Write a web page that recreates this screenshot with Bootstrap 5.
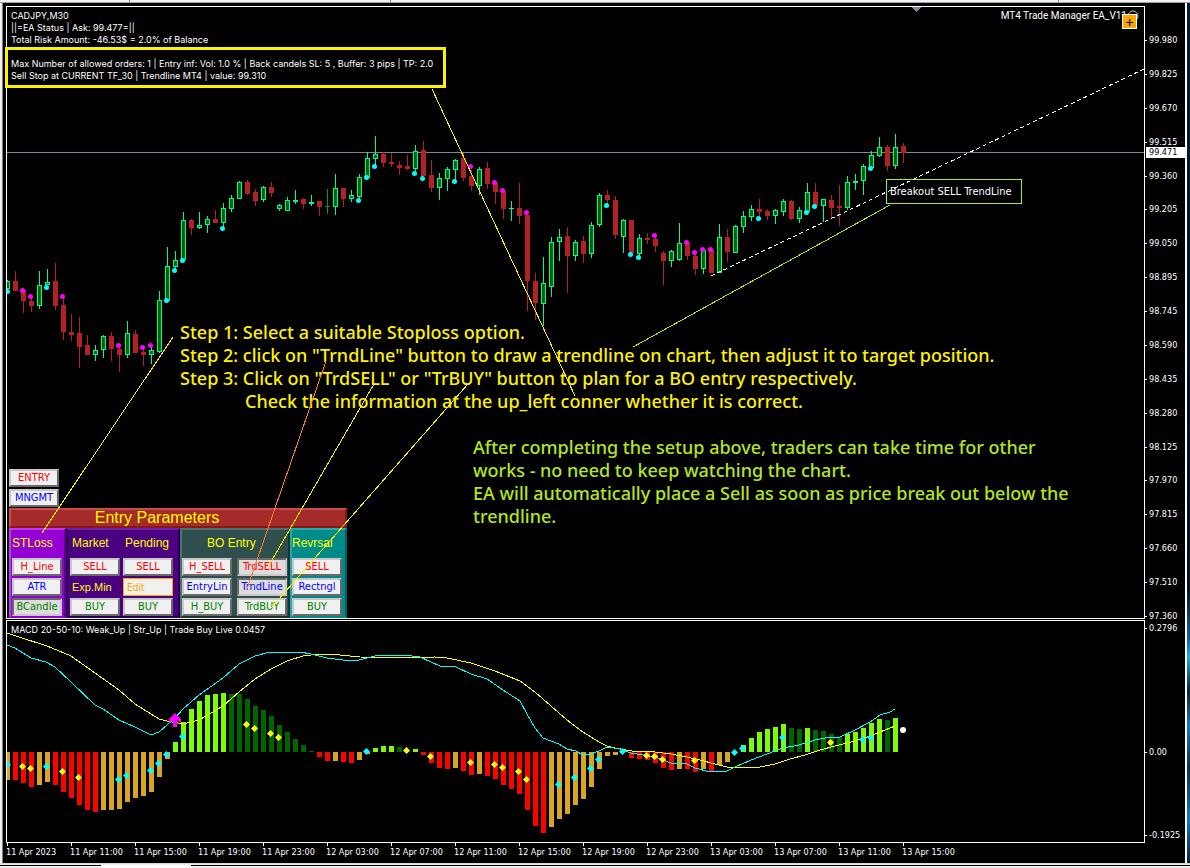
<!DOCTYPE html>
<html lang="en">
<head>
<meta charset="utf-8">
<meta name="viewport" content="width=device-width, initial-scale=1">
<title>CADJPY,M30</title>
<link rel="stylesheet" href="https://cdn.jsdelivr.net/npm/bootstrap@5.3.0/dist/css/bootstrap.min.css">
<style>
:root{--ink:#fff200;--lime:#b5e61d}
body{background:#f0f0f0;color:#fff;font:9px/12px Inter,sans-serif}
.top-strip{height:3px;border-bottom:1px solid #a0a0a0;padding:0 131px 0 129px}
.top-strip i{width:1px;background:#808080}
.top-strip i:nth-child(2){margin-left:260px;margin-right:auto}
.left-edge{width:3px;border-right:1px solid #808080}
.desk{width:3px;background:linear-gradient(#031a33,#02101f 68%,#1163a8 74%,#1aaad8 76%,#04203c 80%,#1478bd 84%,#053055 89%,#1478bd 95%,#04203c)}
.win{background:#000;padding:3px 0 0 3px;border-right:2px solid #fff}
.pane{border:1px solid #fff;min-width:0}
.pane svg{position:absolute;inset:0;width:100%;height:100%}
.ink-layer{z-index:3;pointer-events:none}
.price-row{min-height:0}
.macd-row{height:223px;margin-top:1px}
.scale{width:40px;font:9px/12px "DejaVu Sans Condensed",sans-serif}
.tick{padding-left:4px;position:relative}
.tick::before{content:"";position:absolute;left:0;top:6px;width:2px;height:1px;background:#fff}
.price-ticks{padding-top:28px;margin-bottom:-3px}
.macd-ticks{padding:2px 0}
.zero{margin-top:41px}
.price-now{left:1px;right:0;top:141px;background:#fff;color:#000;padding-left:3px;line-height:11px}
.times{height:20px;font:9px/12px "DejaVu Sans Condensed",sans-serif;overflow:hidden}
.times span{flex:0 0 64px;white-space:nowrap;padding-top:3px;position:relative}
.times span::before{content:"";position:absolute;left:1px;top:0;width:1px;height:3px;background:#fff}
.foot{height:5px;border-top:1px solid #d8d8d8}
.foot div{border-top:1px solid #000;margin-top:1px}
.foot .tab-on{border-color:#fff;background:#fff;width:90px}
.foot .tab-a{width:101px}
.info{left:4px;top:3px;z-index:2}
.info p{margin:0}
.setup{left:-2px;top:40px;width:441px;height:41px;border:3px solid var(--ink);padding:8px 0 0 3px;white-space:nowrap}
.brand{right:5px;top:3px;font-size:10px;font-family:Roboto,sans-serif}
.brand svg{width:12px;height:12px}
.plus{right:7px;top:7px;width:15px;height:15px;border:1px solid #fff;border-radius:0;background:#ffa500;color:#000;padding:0;font:14px/12px "Liberation Sans",sans-serif}
.steps,.after{font:500 18px/23px "Noto Sans",sans-serif;white-space:pre;z-index:2}
.steps{left:173px;top:314px;color:var(--ink)}
.after{left:466px;top:429px;color:var(--lime)}
.steps p,.after p{margin:0}
.steps .cont{padding-left:65px}
.callout{left:879px;top:172px;width:136px;height:25px;border:1px solid var(--lime);font:11px/23px "DejaVu Sans Condensed",sans-serif;padding-left:3px;z-index:2}
.panel{left:2px;bottom:0;width:338px;z-index:2}
.eb{display:block;width:50px;height:18px;padding:0;background:#f0f0f0;border:2px solid;border-color:#c8c8c8 #696969 #696969 #c8c8c8;font:11px/14px "DejaVu Sans Condensed",sans-serif;white-space:nowrap}
.eb.on{background:#dcdcdc;border-color:#696969 #c8c8c8 #c8c8c8 #696969}
.tabs{row-gap:2px;margin-bottom:1px}
.red{color:#f00}.blue{color:#00f}.green{color:green}
.head{height:20px;background:#a52a2a;border:2px solid;border-color:#c94b4b #8b1414 #8b1414 #c94b4b;color:#ff0;font:16px/16px "Liberation Sans",sans-serif;padding-right:42px;margin:0}
.group{height:90px;border:2px solid;display:grid;grid-template-rows:26px 18px 18px 18px;row-gap:2px;column-gap:3px;justify-content:start;justify-items:start}
.g2{grid-template-columns:50px 50px}
.ttl{color:#ff0;font:12px/26px "Liberation Sans",sans-serif;white-space:nowrap;margin:0}
.sl{width:57px;padding-left:1px;background:#9400d3;border-color:#b93cf0 #5c0089 #9400d3 #b93cf0}
.mk{width:114px;padding-left:2px;background:#4b0082;border-color:#6b22a4 #2c0050 #2c0050 #2c0050}
.mk .ttl,.exp{padding-left:2px}
.bo{width:110px;background:#2f4f4f;border-color:#4f7070 #1d3333 #1d3333 #4f7070;column-gap:5px}
.bo .ttl{grid-column:1/3;padding-left:25px}
.rv{width:57px;background:#008b8b;border-color:#20acac #005f5f #008b8b #20acac}
.exp{color:#ff0;font:11px/18px "Liberation Sans",sans-serif}
.edit{width:50px;height:18px;border:1px solid #ffa500;background:#f0f0f0;color:#ffa500;padding:0 3px;font:10px/14px "DejaVu Sans Condensed",sans-serif}
</style>
<script src="https://cdn.jsdelivr.net/npm/bootstrap@5.3.0/dist/js/bootstrap.bundle.min.js"></script>
</head>
<body>
<div class="d-flex flex-column vh-100">
  <div class="top-strip d-flex"><i></i><i></i><i></i></div>
  <div class="d-flex flex-fill" style="min-height:0">
    <div class="left-edge"></div>
    <main class="win flex-fill d-flex flex-column">
      <section class="price-row d-flex flex-fill">
        <div class="pane flex-fill position-relative">
          <svg id="price" viewBox="7 7 1137 611" preserveAspectRatio="none" shape-rendering="crispEdges"></svg>
          <div class="info position-absolute">
            <p>CADJPY,M30</p>
            <p>||=EA Status | Ask: 99.477=||</p>
            <p>Total Risk Amount: -46.53$ = 2.0% of Balance</p>
          </div>
          <div class="setup position-absolute">Max Number of allowed orders: 1 | Entry inf: Vol: 1.0 % | Back candels SL: 5 , Buffer: 3 pips | TP: 2.0<br>Sell Stop at CURRENT TF_30 | Trendline MT4 | value: 99.310</div>
          <div class="brand position-absolute d-flex align-items-center">MT4 Trade Manager EA_V11
            <svg class="position-static" viewBox="0 0 12 12" fill="none" stroke="#ccc"><circle cx="6" cy="6" r="5"/><path d="M3.5 7.5q2.500 2 5 0M4 4.500h1M7 4.500h1"/></svg></div>
          <button class="plus position-absolute" type="button" aria-label="Expand">+</button>
          <div class="callout position-absolute">Breakout SELL TrendLine</div>
          <div class="steps position-absolute"><p>Step 1: Select a suitable Stoploss option.</p><p>Step 2: click on "TrndLine" button to draw a trendline on chart, then adjust it to target position.</p><p>Step 3: Click on "TrdSELL" or "TrBUY" button to plan for a BO entry respectively.</p><p class="cont">Check the information at the up_left conner whether it is correct.</p></div>
          <div class="after position-absolute"><p>After completing the setup above, traders can take time for other</p><p>works - no need to keep watching the chart.</p><p>EA will automatically place a Sell as soon as price break out below the</p><p>trendline.</p></div>
          <div class="panel position-absolute">
            <div class="tabs d-grid">
              <button class="eb red" type="button">ENTRY</button>
              <button class="eb blue" type="button">MNGMT</button>
            </div>
            <h1 class="head text-center">Entry Parameters</h1>
            <div class="d-flex">
              <div class="group sl">
                <h2 class="ttl">STLoss</h2>
                <button class="eb red" type="button">H_Line</button>
                <button class="eb blue" type="button">ATR</button>
                <button class="eb green on" type="button">BCandle</button>
              </div>
              <div class="group mk g2">
                <h2 class="ttl">Market</h2><h2 class="ttl">Pending</h2>
                <button class="eb red" type="button">SELL</button><button class="eb red" type="button">SELL</button>
                <label class="exp" for="expmin">Exp.Min</label><input class="edit" id="expmin" type="text" value="Edit">
                <button class="eb green" type="button">BUY</button><button class="eb green" type="button">BUY</button>
              </div>
              <div class="group bo g2">
                <h2 class="ttl">BO Entry</h2>
                <button class="eb red" type="button">H_SELL</button><button class="eb red on" type="button">TrdSELL</button>
                <button class="eb blue" type="button">EntryLin</button><button class="eb blue on" type="button">TrndLine</button>
                <button class="eb green" type="button">H_BUY</button><button class="eb green" type="button">TrdBUY</button>
              </div>
              <div class="group rv">
                <h2 class="ttl">Revrsal</h2>
                <button class="eb red" type="button">SELL</button>
                <button class="eb blue" type="button">Rectngl</button>
                <button class="eb green" type="button">BUY</button>
              </div>
            </div>
          </div>
          <svg class="ink-layer" viewBox="7 7 1137 611" preserveAspectRatio="none" fill="none" shape-rendering="crispEdges">
            <path stroke="#fff200" d="M432 89L575 396M173 337L42 533M374 384L268 567M468 384L271 608"/>
            <path stroke="#ff7f27" d="M326 361L247 589"/>
            <path stroke="#b5e61d" d="M890 205L633 347"/>
            <path stroke="#fff" stroke-dasharray="4 3" d="M711 276L1144 69"/>
          </svg>
        </div>
        <div class="scale price-ticks position-relative d-flex flex-column justify-content-between" id="prices">
          <div class="price-now position-absolute">99.471</div>
        </div>
      </section>
      <section class="macd-row d-flex flex-shrink-0">
        <div class="pane flex-fill position-relative">
          <svg id="macd" viewBox="7 621 1137 221" preserveAspectRatio="none" shape-rendering="crispEdges"></svg>
          <div class="info position-absolute">MACD 20-50-10: Weak_Up | Str_Up | Trade Buy Live 0.0457</div>
        </div>
        <div class="scale macd-ticks d-flex flex-column justify-content-between">
          <div class="tick">0.2796</div><div class="tick zero">0.00</div><div class="tick">-0.1925</div>
        </div>
      </section>
      <div class="times d-flex flex-shrink-0" id="times"></div>
    </main>
    <div class="desk"></div>
  </div>
  <div class="foot d-flex"><div class="tab-a"></div><div class="tab-on"></div><div class="flex-fill"></div></div>
</div>
<script>
// candle: direction, high, body top, body bottom, low
const candles=`g280 281 289 292,r271 281 291 291,r290 290 301 313,r295 301 306 312,g271 285 306 309,g269 282 285 285,r263 281 306 310,r296 305 332 340,r314 332 335 341,r317 333 347 368,r335 345 355 355,g345 350 355 361,g335 336 350 358,r332 336 349 361,r346 349 355 372,g321 333 355 358,r330 334 353 353,r349 352 355 366,g347 350 355 364,g291 300 352 353,g247 266 301 301,g251 260 267 270,g212 220 260 260,r219 220 228 235,g212 225 228 229,g216 219 225 233,r210 219 223 223,g203 208 223 227,g195 198 209 212,g181 182 199 199,r180 182 194 195,r189 192 201 206,g186 187 200 202,r182 187 193 197,g204 205 209 211,g197 200 211 211,g190 200 202 204,r198 199 204 209,g195 202 204 206,r201 201 207 216,d189 206 207 214,g174 188 207 215,r188 188 199 207,g190 195 199 202,g174 177 197 200,g152 158 178 178,g136 154 159 165,r152 154 163 167,r153 162 164 167,r161 165 168 175,r155 166 169 170,g145 151 169 171,r141 150 176 176,r160 175 188 192,g173 178 188 200,g167 169 179 191,g159 160 170 180,r153 158 178 181,r170 176 186 191,g167 169 186 195,r162 168 184 189,r183 183 192 204,r190 191 209 219,g201 208 209 221,r183 208 216 224,r213 215 281 311,r273 281 303 320,g257 283 304 326,g237 242 287 297,g229 237 242 261,r227 236 256 293,g240 242 256 261,r236 241 254 263,g222 225 254 258,g193 195 225 227,r190 195 200 204,r196 200 235 239,g219 220 237 253,r220 220 253 255,g234 238 254 257,r233 238 240 244,r236 239 246 252,r251 253 261 285,g250 251 261 267,g223 243 260 261,r243 243 256 260,r253 256 269 275,g250 250 269 274,r249 250 273 273,g224 237 273 273,r229 237 252 262,g225 226 253 253,g211 216 227 233,g205 209 217 221,r199 209 212 216,r209 211 216 220,g209 210 216 224,g199 201 212 216,r200 201 219 220,g207 210 219 223,g183 192 212 212,r183 192 206 206,g199 199 206 222,r195 200 208 218,r185 206 208 226,g176 182 208 210,g174 181 183 190,g164 166 181 195,g151 155 168 168,g137 147 156 157,r145 147 166 171,g134 147 166 169,r143 146 153 163`.split(',');
const rect=(x,y,w,h,f)=>`<rect x="${x}" y="${y}" width="${w}" height="${h}" fill="${f}"/>`;
let out='<path d="M911 7h10l-5 5z" fill="#778899"/>'+rect(7,152,1137,1,'#778899');
candles.forEach((c,i)=>{
  const [h,t,b,l]=c.slice(1).split(' ').map(Number),x=7+8*i;
  const col={g:'#00fa9a',r:'#b22222',d:'#228b22'}[c[0]];
  out+=rect(x,h,1,Math.max(l-h,1),col)+rect(x-2,t,5,b-t,col);
  if(c[0]==='g'&&b-t>2)out+=rect(x-1,t+1,3,b-t-2,'#006400');
});
const marks='c7 291,m22 290,m30 296,c46 287,m62 296,m118 345,m142 347,m150 345,c166 300,c174 270,c182 260,c222 228,c358 200,c366 177,c374 166,c414 173,c422 178,c454 181,m470 166,m494 182,m502 190,m526 212,c606 205,c630 254,c638 257,m654 235,m686 242,m694 252,m702 249,m710 249,c758 218,c806 212,c814 206,c870 168';
marks.split(',').forEach(m=>{const [x,y]=m.slice(1).split(' ').map(Number);
  out+=`<circle cx="${x+.5}" cy="${y+.5}" r="2.500" shape-rendering="auto" fill="${m[0]==='c'?'#00ffff':'#ff00ff'}"/>`});
document.getElementById('price').innerHTML=out;

// histogram: colour letter and end of the bar, n where there is no bar
const bars='o780 r780 r783 r787 o785 o782 r785 r792 r798 r805 r810 r812 o810 o810 o809 o802 o798 o796 o792 o777 o759 l742 l722 l709 l701 l695 l694 l693 d694 d694 d699 d706 d710 d716 d725 d732 d739 d745 d751 r757 r761 o761 r762 r763 o760 o754 l748 l746 l746 d747 d750 l749 r755 r763 r768 r769 o768 r771 r775 o774 r776 r779 r785 r789 r794 r810 r826 r833 o827 o819 o814 o805 o799 o787 o769 o756 o755 n r758 r759 r760 r763 r768 r770 o769 r769 r772 o769 r771 o765 o762 n l745 l738 l732 l729 l727 l724 d728 d729 l728 d730 d731 d734 d737 l734 l732 l728 l723 l719 d720 l718'.split(' ');
const hue={o:'#daa520',r:'#ff0000',l:'#7cfc00',d:'#006400'};
out='';
bars.forEach((b,i)=>{if(b==='n')return;const y=+b.slice(1);out+=rect(5+8*i,Math.min(y,752),5,Math.abs(y-752),hue[b[0]])});
const signal='7,633 19,637 47,646 71,656 95,673 119,690 135,704 159,719 167,721 183,724 199,720 223,706 239,692 255,679 271,669 287,661 303,656 319,654 340,655 360,657 400,658 435,657 447,658 471,663 495,671 520,681 535,692 551,706 567,720 583,732 599,742 607,746 615,748 632,751 655,752 671,754 687,757 700,760 715,764 727,767 743,768 760,767 775,764 790,759 805,755 820,750 835,746 855,741 870,736 885,730 895,726';
const main='7,645 15,648 31,658 46,662 55,667 71,682 95,705 103,709 119,720 135,727 151,735 159,732 175,718 183,709 199,695 223,678 239,664 255,656 270,652 300,652 311,654 327,658 351,661 359,660 375,656 403,655 420,657 431,662 440,666 456,667 471,674 487,679 503,690 520,701 527,714 535,728 543,738 559,744 567,749 576,751 583,755 591,754 599,751 607,747 620,749 631,753 655,757 671,763 687,764 695,768 710,772 727,771 735,767 751,760 767,754 783,748 799,745 815,740 825,738 840,737 855,730 870,722 880,715 890,712 895,709';
out+=`<polyline points="${signal}" fill="none" stroke="#ffff00"/><polyline points="${main}" fill="none" stroke="#00ffff"/>`;
'c7 764,y22 766,y30 768,c46 766,y62 771,y78 777,c118 779,c126 775,c150 770,c158 763,c166 754,c182 736,y246 724,y254 728,y270 733,y278 737,c366 751,y406 750,y430 756,y470 762,y494 764,y502 767,y518 771,y526 779,c558 784,c574 777,c590 768,c598 759,c622 751,y646 755,y654 756,y662 759,y694 760,c734 752,c742 748,c782 737,y830 742,c862 739,c870 737'.split(',').forEach(m=>{
  const [x,y]=m.slice(1).split(' ').map(Number);
  out+=`<path d="M${x-3} ${y+.5}l3.500-3.500l3.500 3.500l-3.500 3.500z" shape-rendering="auto" fill="${m[0]==='c'?'#00ffff':'#ffff00'}"/>`});
out+='<circle cx="903" cy="730" r="3" fill="#fff" shape-rendering="auto"/><path d="M175 713l6 6v4l-4-3v7h-4v-7l-4 3v-4z" fill="#ff00ff" shape-rendering="auto"/>';
document.getElementById('macd').innerHTML=out;

'99.980 99.825 99.670 99.515 99.360 99.205 99.050 98.895 98.745 98.590 98.435 98.280 98.125 97.970 97.815 97.660 97.510 97.360'.split(' ').forEach(p=>
  document.getElementById('prices').insertAdjacentHTML('beforeend',`<div class="tick">${p}</div>`));
document.getElementById('times').innerHTML=['11 Apr 2023','11 Apr 11:00','11 Apr 15:00','11 Apr 19:00','11 Apr 23:00','12 Apr 03:00','12 Apr 07:00','12 Apr 11:00','12 Apr 15:00','12 Apr 19:00','12 Apr 23:00','13 Apr 03:00','13 Apr 07:00','13 Apr 11:00','13 Apr 15:00'].map(t=>`<span>${t}</span>`).join('');
</script>
</body>
</html>
